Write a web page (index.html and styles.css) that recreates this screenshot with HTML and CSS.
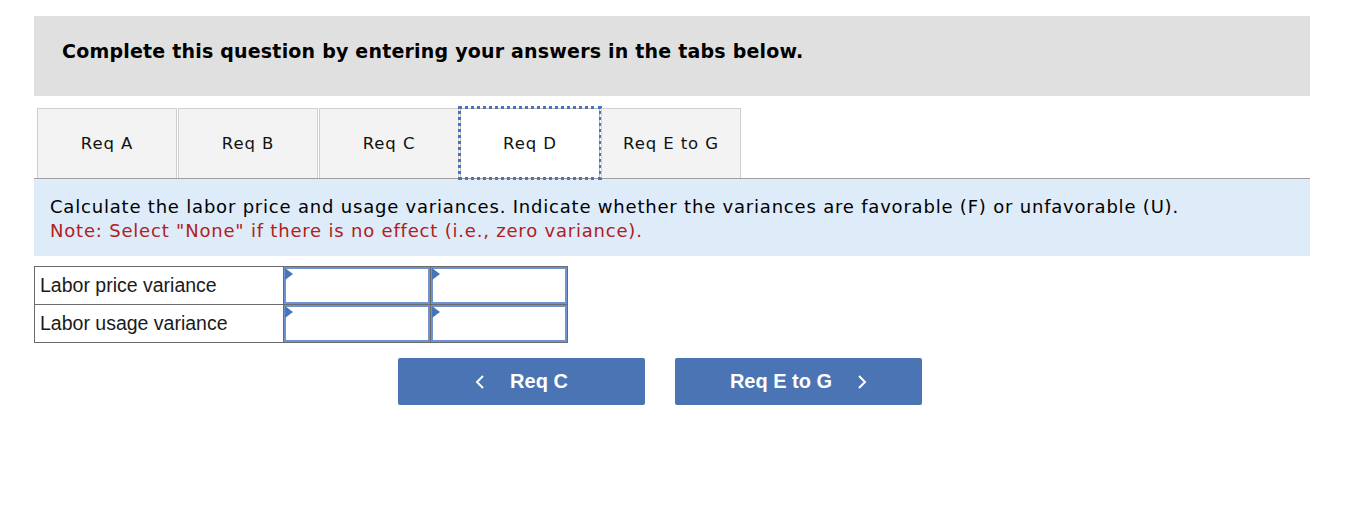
FILE: index.html
```html
<!DOCTYPE html>
<html lang="en">
<head>
    <meta charset="UTF-8">
    <meta name="viewport" content="width=device-width, initial-scale=1.0">
    <title>Req D</title>
    <link rel="stylesheet" href="styles.css">
</head>
<body>
    <div id="wrap">
        <div id="banner">
            <h1>Complete this question by entering your answers in the tabs below.</h1>
        </div>

        <ul id="tabs">
            <li><a href="#">Req A</a></li>
            <li><a href="#">Req B</a></li>
            <li><a href="#">Req C</a></li>
            <li><a class="current" href="#">Req D</a></li>
            <li><a href="#">Req E to G</a></li>
        </ul>

        <div id="prompt">
            <p>Calculate the labor price and usage variances. Indicate whether the variances are favorable (F) or unfavorable (U).</p>
            <p class="note">Note: Select "None" if there is no effect (i.e., zero variance).</p>
        </div>

        <table id="answers">
            <tr>
                <td class="label">Labor price variance</td>
                <td class="cell"><div class="box"></div></td>
                <td class="cell"><div class="box"></div></td>
            </tr>
            <tr>
                <td class="label">Labor usage variance</td>
                <td class="cell"><div class="box"></div></td>
                <td class="cell"><div class="box"></div></td>
            </tr>
        </table>

        <div id="nav">
            <a class="navbtn" href="#">
                <svg class="chev" width="10" height="14" viewBox="0 0 10 14"><polyline points="8,1 2,7 8,13" fill="none" stroke="#fff" stroke-width="2"/></svg>
                Req C
            </a>
            <a class="navbtn" href="#">
                Req E to G
                <svg class="chev" width="10" height="14" viewBox="0 0 10 14"><polyline points="2,1 8,7 2,13" fill="none" stroke="#fff" stroke-width="2"/></svg>
            </a>
        </div>
    </div>
</body>
</html>
```

FILE: styles.css
```css
body {
    margin: 0;
    padding: 0;
    font-family: "DejaVu Sans", Verdana, sans-serif;
    color: #000;
    background: #fff;
}

#wrap {
    width: 1276px;
    margin-left: 34px;
    padding-top: 16px;
}

#banner {
    background-color: #e0e0e0;
    height: 80px;
    padding: 0 28px;
    display: flex;
    align-items: center;
}

#banner h1 {
    margin: 0;
    font-size: 19px;
    letter-spacing: 0.2px;
    font-weight: bold;
    padding-bottom: 10px;
}

#tabs {
    list-style: none;
    margin: 12px 0 0 0;
    padding: 0 0 0 3px;
    display: flex;
    border-bottom: 1px solid #a0a0a0;
}

#tabs li {
    margin-right: 1px;
}

#tabs a {
    display: flex;
    align-items: center;
    justify-content: center;
    width: 140px;
    height: 70px;
    background-color: #f3f3f3;
    border: 1px solid #cfcfcf;
    border-bottom: none;
    color: #111;
    text-decoration: none;
    font-size: 16.5px;
    letter-spacing: 0.9px;
    box-sizing: border-box;
}

#tabs a.current {
    background-color: #fff;
    outline: 3px dotted #4a74b8;
    outline-offset: -1px;
    border-color: #bbb;
}

#prompt {
    background-color: #deebf8;
    height: 77px;
    padding: 16px 16px 0 16px;
    box-sizing: border-box;
}

#prompt p {
    margin: 0;
    font-size: 18px;
    letter-spacing: 0.8px;
    line-height: 24px;
}

#prompt p.note {
    color: #b0201e;
}

#answers {
    margin-top: 10px;
    border-collapse: collapse;
    font-family: "Liberation Sans", Arial, sans-serif;
    font-size: 19.5px;
}

#answers td {
    border: 1px solid #6b6b6b;
    height: 37px;
    padding: 0;
}

#answers td.label {
    width: 243px;
    padding-left: 5px;
    color: #1a1a1a;
}

#answers td.cell {
    width: 146px;
}

#answers td.cell + td.cell {
    width: 136px;
}

.box {
    position: relative;
    height: 37px;
    border: 2px solid #6f93d0;
    box-sizing: border-box;
    background: #fff;
}

.box::before {
    content: "";
    position: absolute;
    top: -1px;
    left: -1px;
    border-top: 6px solid transparent;
    border-bottom: 6px solid transparent;
    border-left: 8px solid #4a74b8;
}

#nav {
    display: flex;
    gap: 30px;
    margin-top: 15px;
    margin-left: 364px;
}

.navbtn {
    display: flex;
    align-items: center;
    justify-content: center;
    gap: 25px;
    width: 247px;
    height: 47px;
    background-color: #4a74b4;
    color: #fff;
    border-radius: 2px;
    text-decoration: none;
    font-family: "Liberation Sans", Arial, sans-serif;
    font-weight: bold;
    font-size: 20px;
}

.chev {
    display: block;
}
```
